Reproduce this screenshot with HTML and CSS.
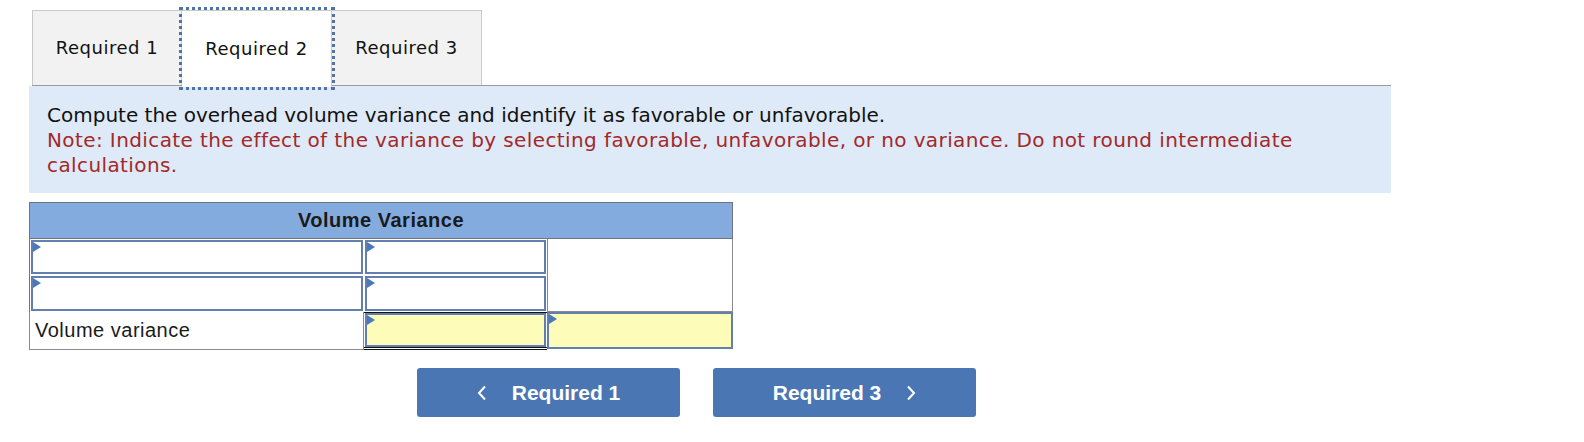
FILE: index.html
```html
<!DOCTYPE html>
<html>
<head>
<meta charset="utf-8">
<link rel="stylesheet" href="styles.css">
</head>
<body>
<div class="page">
  <div class="tabs">
    <div class="tab">Required 1</div>
    <div class="tab active">Required 2</div>
    <div class="tab">Required 3</div>
  </div>
  <div class="prompt">
    <p class="q">Compute the overhead volume variance and identify it as favorable or unfavorable.</p>
    <p class="note">Note: Indicate the effect of the variance by selecting favorable, unfavorable, or no variance. Do not round intermediate calculations.</p>
  </div>
  <div class="vtable">
    <div class="vhead">Volume Variance</div>
    <div class="cell r1 c1"><div class="inp"><span class="tri"></span></div></div>
    <div class="cell r1 c2"><div class="inp"><span class="tri"></span></div></div>
    <div class="cell blank"></div>
    <div class="cell r2 c1"><div class="inp"><span class="tri"></span></div></div>
    <div class="cell r2 c2"><div class="inp"><span class="tri"></span></div></div>
    <div class="cell label">Volume variance</div>
    <div class="cell total"><div class="inp yellow"><span class="tri"></span></div></div>
    <div class="cell eff"><div class="inp yellow"><span class="tri"></span></div></div>
  </div>
  <div class="nav">
    <button class="btn"><svg class="chev" width="10" height="16" viewBox="0 0 10 16"><polyline points="8,1.5 2,8 8,14.5" fill="none" stroke="#fff" stroke-width="2"/></svg><span>Required 1</span></button>
    <button class="btn"><span>Required 3</span><svg class="chev" width="10" height="16" viewBox="0 0 10 16"><polyline points="2,1.5 8,8 2,14.5" fill="none" stroke="#fff" stroke-width="2"/></svg></button>
  </div>
</div>
</body>
</html>
```

FILE: styles.css
```css
html, body { margin: 0; padding: 0; background: #fff; }
.page { padding: 10px 0 0 29px; width: 1362px; }
.tabs {
  display: flex;
  margin-left: 3px;
  height: 76px;
  border-bottom: 1px solid #9c9c9c;
  width: 1359px;
  box-sizing: border-box;
  font-family: "DejaVu Sans", Verdana, sans-serif;
  font-size: 18px;
  letter-spacing: 0.5px;
  color: #111;
}
.tab {
  width: 150px;
  box-sizing: border-box;
  display: flex;
  align-items: center;
  justify-content: center;
  background: #f2f2f2;
  border: 1px solid #c9c9c9;
  border-bottom: none;
  padding-bottom: 1px;
}
.tab + .tab { border-left: none; }
.tab.active {
  background: #fff;
  outline: 3px dotted #4f72a8;
  position: relative;
  z-index: 1;
  height: 77px;
}
.prompt {
  background: #deeaf7;
  padding: 17px 40px 15px 18px;
  font-family: "DejaVu Sans", Verdana, sans-serif;
  font-size: 20px;
  line-height: 25px;
}
.prompt p { margin: 0; }
.q { color: #111; }
.note { color: #a3282a; letter-spacing: 0.4px; }
.vtable {
  margin-top: 9px;
  display: grid;
  grid-template-columns: 335px 183px 186px;
  grid-template-rows: 37px 36px 37px 38px;
  width: 704px;
  font-family: "Liberation Sans", Arial, sans-serif;
}
.vhead {
  grid-column: 1 / 4;
  background: #84abde;
  border: 1px solid #707580;
  display: flex;
  align-items: center;
  justify-content: center;
  font-weight: bold;
  font-size: 20px;
  letter-spacing: 0.5px;
  color: #1a1a1a;
}
.cell { box-sizing: border-box; padding: 1px; display: flex; }
.c1 { border-left: 1px solid #707580; }
.blank {
  grid-column: 3; grid-row: 2 / 4;
  border: 1px solid #8a8a8a;
  border-top: none;
  background: #fff;
}
.label {
  border: 1px solid #8a8a8a;
  border-top: none;
  align-items: center;
  padding-left: 5px;
  font-size: 20px;
  letter-spacing: 0.5px;
  color: #1a1a1a;
}
.inp {
  flex: 1;
  position: relative;
  border: 2px solid #637fae;
  background: #fff;
}
.inp.yellow { background: #fdfdb9; }
.tri {
  position: absolute;
  left: 0; top: 0;
  width: 0; height: 0;
  border-top: 5px solid transparent;
  border-bottom: 5px solid transparent;
  border-left: 8px solid #4a77bd;
}
.total {
  border-top: 1px solid #111;
  border-bottom: 3px double #111;
  padding: 0 1px;
}
.eff { padding: 0 0 1px 0; }
.nav {
  display: flex;
  gap: 33px;
  margin: 18px 0 0 388px;
}
.btn {
  width: 263px;
  height: 49px;
  border: none;
  border-radius: 3px;
  background: #4a76b4;
  color: #fff;
  font-family: "Liberation Sans", Arial, sans-serif;
  font-weight: bold;
  font-size: 21px;
  display: flex;
  align-items: center;
  justify-content: center;
  gap: 25px;
  padding: 0;
}
```
